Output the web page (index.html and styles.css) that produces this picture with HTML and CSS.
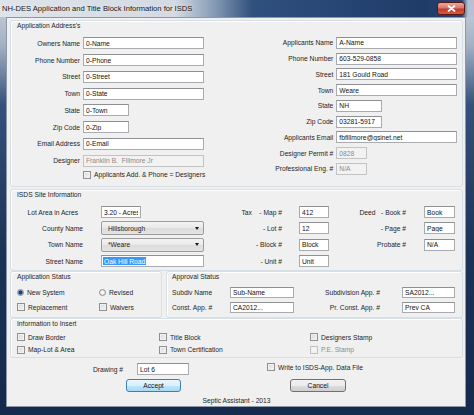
FILE: index.html
```html
<!DOCTYPE html>
<html lang="en">
<head>
  <meta charset="UTF-8" />
  <meta name="viewport" content="width=device-width, initial-scale=1.0" />
  <title>NH-DES Application and Title Block Information for ISDS</title>
  <link rel="stylesheet" href="styles.css">
</head>
<body>
  <div class="window">
    <header class="titlebar">
      <span class="title">NH-DES Application and Title Block Information for ISDS</span>
      <button class="close-btn" title="Close">
        <svg width="9" height="7" viewBox="0 0 9 7"><path d="M1.5 1 L7.5 6 M7.5 1 L1.5 6" stroke="#fff" stroke-width="1.7" stroke-linecap="round"/></svg>
      </button>
    </header>

    <main class="content">
      <section class="group address">
        <div class="group-title">Application Address's</div>
        <div class="address-cols">
          <div class="col owner">
            <div class="row"><label>Owners Name</label><input class="tb wide" value="0-Name"></div>
            <div class="row"><label>Phone Number</label><input class="tb wide" value="0-Phone"></div>
            <div class="row"><label>Street</label><input class="tb wide" value="0-Street"></div>
            <div class="row"><label>Town</label><input class="tb wide" value="0-State"></div>
            <div class="row"><label>State</label><input class="tb short" value="0-Town"></div>
            <div class="row"><label>Zip Code</label><input class="tb short" value="0-Zip"></div>
            <div class="row"><label>Email Address</label><input class="tb wide" value="0-Email"></div>
            <div class="row"><label>Designer</label><input class="tb wide" value="Franklin B.  Fillmore Jr" disabled></div>
            <div class="row check-row"><span class="cb"></span>Applicants Add. &amp; Phone = Designers</div>
          </div>
          <div class="col applicant">
            <div class="row"><label>Applicants Name</label><input class="tb wide" value="A-Name"></div>
            <div class="row"><label>Phone Number</label><input class="tb wide" value="603-529-0858"></div>
            <div class="row"><label>Street</label><input class="tb wide" value="181 Gould Road"></div>
            <div class="row"><label>Town</label><input class="tb wide" value="Weare"></div>
            <div class="row"><label>State</label><input class="tb short" value="NH"></div>
            <div class="row"><label>Zip Code</label><input class="tb short" value="03281-5917"></div>
            <div class="row"><label>Applicants Email</label><input class="tb wide" value="fbfillmore@gsinet.net"></div>
            <div class="row"><label>Designer Permit #</label><input class="tb tiny" value="0828" disabled></div>
            <div class="row"><label>Professional Eng. #</label><input class="tb tiny" value="N/A" disabled></div>
          </div>
        </div>
      </section>

      <section class="group site">
        <div class="group-title">ISDS Site Information</div>
        <div class="site-grid">
          <label class="lbl-lot">Lot Area in Acres</label>
          <input class="tb lot" value="3.20 - Acres">
          <label>Tax&nbsp;&nbsp;&nbsp; - Map #</label>
          <input class="tb" value="412">
          <label class="lbl-c">Deed&nbsp;&nbsp; - Book #</label>
          <input class="tb" value="Book">

          <label class="lbl-a">County Name</label>
          <div class="combo"><span>Hillsborough</span><span class="arrow"></span></div>
          <label>- Lot #</label>
          <input class="tb" value="12">
          <label class="lbl-c">- Page #</label>
          <input class="tb" value="Page">

          <label class="lbl-a">Town Name</label>
          <div class="combo"><span>*Weare</span><span class="arrow"></span></div>
          <label>- Block #</label>
          <input class="tb" value="Block">
          <label class="lbl-c">Probate #</label>
          <input class="tb" value="N/A">

          <label class="lbl-a">Street Name</label>
          <div class="tb street"><span class="sel">Oak Hill Road</span></div>
          <label>- Unit #</label>
          <input class="tb" value="Unit">
        </div>
      </section>

      <div class="status-row">
        <section class="group app-status">
          <div class="group-title">Application Status</div>
          <div class="opt-grid">
            <div class="opt"><span class="rb on"></span>New System</div>
            <div class="opt"><span class="rb"></span>Revised</div>
            <div class="opt"><span class="cb"></span>Replacement</div>
            <div class="opt"><span class="cb"></span>Waivers</div>
          </div>
        </section>
        <section class="group approval">
          <div class="group-title">Approval Status</div>
          <div class="approval-grid">
            <label>Subdiv Name</label>
            <input class="tb" value="Sub-Name">
            <label class="lbl-r">Subdivision App. #</label>
            <input class="tb" value="SA2012...">
            <label>Const. App. #</label>
            <input class="tb" value="CA2012...">
            <label class="lbl-r">Pr. Const. App. #</label>
            <input class="tb" value="Prev CA">
          </div>
        </section>
      </div>

      <section class="group insert">
        <div class="group-title">Information to Insert</div>
        <div class="insert-grid">
          <div class="opt"><span class="cb"></span>Draw Border</div>
          <div class="opt"><span class="cb"></span>Title Block</div>
          <div class="opt"><span class="cb"></span>Designers Stamp</div>
          <div class="opt"><span class="cb"></span>Map-Lot &amp; Area</div>
          <div class="opt"><span class="cb"></span>Town Certification</div>
          <div class="opt off"><span class="cb"></span>P.E. Stamp</div>
        </div>
      </section>

      <div class="drawing-row">
        <label>Drawing #</label>
        <input class="tb drawing" value="Lot 6">
        <div class="opt write-opt"><span class="cb"></span>Write to ISDS-App. Data File</div>
      </div>

      <div class="button-row">
        <button class="btn accept">Accept</button>
        <button class="btn cancel">Cancel</button>
      </div>

      <div class="footer-note">Septic Assistant - 2013</div>
    </main>
  </div>
</body>
</html>
```

FILE: styles.css
```css
* {
  box-sizing: border-box;
}
body {
  margin: 0;
  font-family: "Liberation Sans", Arial, sans-serif;
  font-size: 6.7px;
  color: #1e1e1e;
  background-color: #13264a;
}
.window {
  width: 474px;
  height: 415px;
  display: flex;
  flex-direction: column;
  overflow: hidden;
  background: linear-gradient(to bottom, #c9d1db 0, #a3b1c3 45px, #34507c 105px, #1c3358 250px, #142a4d 100%);
}

/* title bar */
.titlebar {
  height: 17px;
  flex: none;
  display: flex;
  align-items: center;
  justify-content: space-between;
  padding: 0 9px 0 2px;
  background: linear-gradient(to right, #dfe4ea 0, #d3dae3 175px, #8499b5 215px, #30507d 252px, #1f3c69 420px, #264370 462px, #b5c2d1 468px);
}
.title {
  font-size: 7.6px;
  color: #151515;
  white-space: nowrap;
  text-shadow: 0 0 4px rgba(255, 255, 255, 0.8);
}
.close-btn {
  width: 28px;
  height: 13px;
  padding: 0;
  display: flex;
  align-items: center;
  justify-content: center;
  border: 1px solid #5a1a14;
  border-radius: 3px;
  background: linear-gradient(#eba999, #d9786a 45%, #c23b2b 55%, #d65a45);
}

/* dialog body */
.content {
  flex: 1;
  margin: 0 8px 8px 6px;
  padding: 2px 2px 0 3px;
  background-color: #f0f0f0;
  border: 1px solid #8c98a8;
}
.group {
  border: 1px solid #d5dfe5;
  border-radius: 3px;
  box-shadow: inset 1px 1px 0 #fff;
}
.group-title {
  line-height: 9px;
  padding-left: 6px;
}
label {
  white-space: nowrap;
}

/* text boxes */
.tb {
  height: 12px;
  padding: 0 2px;
  border: 1px solid #a9abae;
  border-top-color: #8e9094;
  border-radius: 0;
  background-color: #fff;
  font: inherit;
  color: #111;
  outline: none;
  overflow: hidden;
  white-space: nowrap;
}
.tb:disabled {
  background-color: #f2f2f2;
  border-color: #c3c3c3;
  color: #8a8a8a;
}
.wide { width: 121px; }
.short { width: 46px; }
.tiny { width: 31px; }

/* checkboxes and radios */
.cb {
  width: 8px;
  height: 8px;
  flex: none;
  border: 1px solid #8e8f8f;
  background: linear-gradient(135deg, #d6d6d6, #f7f7f7);
  box-shadow: inset 0 0 0 1px #f1f1f1;
}
.rb {
  width: 7px;
  height: 7px;
  flex: none;
  border: 1px solid #8e8f8f;
  border-radius: 50%;
  background: radial-gradient(circle, #ffffff, #d8d8d8);
}
.rb.on {
  background: radial-gradient(circle, #1d3f73 0, #1d3f73 1.4px, #6a8cb8 2.2px, #e8eef5 3px);
}
.opt {
  display: flex;
  align-items: center;
  gap: 3px;
  white-space: nowrap;
}
.opt.off {
  color: #8d8d8d;
}
.opt.off .cb {
  border-color: #c2c2c2;
  background: #f4f4f4;
}

/* application address group */
.address {
  height: 167px;
}
.address-cols {
  display: flex;
  margin-top: 5px;
}
.col {
  display: flex;
  flex-direction: column;
}
.row {
  display: flex;
  align-items: center;
}
.owner .row {
  height: 16.75px;
}
.owner label {
  width: 69px;
  margin-right: 3px;
  text-align: right;
}
.owner .check-row {
  height: 11px;
  padding-left: 72px;
  gap: 3px;
}
.applicant {
  margin-left: 33px;
}
.applicant .row {
  height: 15.75px;
}
.applicant label {
  width: 95px;
  margin-right: 3px;
  text-align: right;
}

/* site group */
.site {
  height: 82px;
  margin-top: 2px;
}
.site-grid {
  display: grid;
  grid-template-columns: 90px 103px 95px 30px 95px 31px;
  grid-template-rows: repeat(4, 16.3px);
  align-items: center;
  margin-top: 5px;
}
.site-grid label {
  text-align: right;
  padding-right: 17px;
}
.site-grid .lbl-a,
.site-grid .lbl-c {
  padding-right: 18px;
}
.site-grid .lbl-lot {
  padding-right: 23px;
}
.site-grid .tb {
  width: 100%;
}
.site-grid .lot {
  width: 40px;
}
.combo {
  height: 14px;
  display: flex;
  align-items: center;
  justify-content: space-between;
  padding: 0 4px 0 6px;
  border: 1px solid #9c9c9c;
  border-radius: 2px;
  background: linear-gradient(#f3f3f3, #e9e9e9 50%, #dcdcdc 51%, #e4e4e4);
}
.combo .arrow {
  border-left: 2.5px solid transparent;
  border-right: 2.5px solid transparent;
  border-top: 3px solid #1a1a1a;
}
.street {
  display: flex;
  align-items: stretch;
  padding: 1px;
}
.sel {
  display: flex;
  align-items: center;
  padding: 0 1px;
  background-color: #3399ff;
  color: #fff;
}

/* status groups */
.status-row {
  display: flex;
  gap: 4px;
  height: 47px;
}
.status-row .group {
  height: 100%;
}
.app-status {
  width: 152px;
}
.approval {
  flex: 1;
}
.approval .group-title {
  padding-left: 5px;
}
.opt-grid {
  display: grid;
  grid-template-columns: 82px auto;
  grid-template-rows: repeat(2, 15px);
  align-items: center;
  padding-left: 6px;
  margin-top: 3.5px;
}
.approval-grid {
  display: grid;
  grid-template-columns: 58px 64px 108px 53px;
  grid-template-rows: repeat(2, 15px);
  align-items: center;
  padding-left: 5px;
  margin-top: 3.5px;
}
.approval-grid .tb {
  width: 100%;
  height: 11px;
}
.approval-grid .lbl-r {
  text-align: right;
  padding-right: 22px;
}

/* information to insert */
.insert {
  height: 40px;
}
.insert-grid {
  display: grid;
  grid-template-columns: 142px 151px auto;
  grid-template-rows: repeat(2, 12.5px);
  align-items: center;
  padding-left: 6px;
  margin-top: 3px;
}

/* bottom */
.drawing-row {
  display: flex;
  align-items: center;
  height: 14px;
  margin-top: 4px;
}
.drawing-row label {
  width: 113px;
  margin-right: 14px;
  text-align: right;
}
.drawing {
  width: 52px;
}
.write-opt {
  margin-left: 78px;
  margin-top: -4px;
}
.button-row {
  display: flex;
  height: 13px;
  margin-top: 3px;
}
.btn {
  height: 13px;
  padding: 0;
  border: 1px solid #707070;
  border-radius: 3px;
  font: inherit;
  color: #111;
  background: linear-gradient(#f2f2f2, #ebebeb 50%, #dddddd 51%, #cfcfcf);
}
.accept {
  width: 55px;
  margin-left: 116px;
  border-color: #3c7fb1;
  background: linear-gradient(#eaf6fd, #d9f0fc 50%, #bee6fd 51%, #a7d9f5);
}
.cancel {
  width: 56px;
  margin-left: 109px;
}
.footer-note {
  text-align: center;
  line-height: 9px;
  margin-top: 4px;
}
```
